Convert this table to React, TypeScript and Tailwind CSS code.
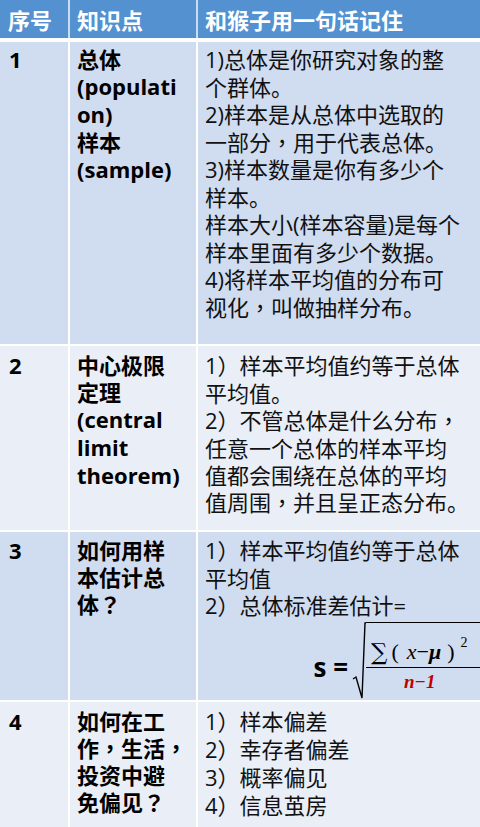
import React from 'react'

const cjk = { fontFamily: '"Noto Sans CJK SC", sans-serif' }
const latin = { fontFamily: '"Open Sans", "Noto Sans CJK SC", sans-serif' }
// TC centres full-width comma / question mark, closer to the reference
const punct = { fontFamily: '"Noto Sans CJK TC", "Noto Sans CJK SC", sans-serif' }

// split a line into ASCII, centred punctuation and CJK runs
function Mixed({ text }: { text: string }) {
  const parts = text.match(/[\x20-\x7e]+|[，？]+|[^\x20-\x7e，？]+/g) || []
  return (
    <>
      {parts.map((p, i) => {
        if (/^[\x20-\x7e]+$/.test(p))
          return (
            <span key={i} style={latin}>
              {p}
            </span>
          )
        if (/^[，？]+$/.test(p))
          return (
            <span key={i} style={punct}>
              {p}
            </span>
          )
        return <span key={i}>{p}</span>
      })}
    </>
  )
}

type Row = {
  no: string
  topic: string[]
  notes: string[]
  height: string
  bg: string
  pt: string
  formula?: boolean
}

const rows: Row[] = [
  {
    no: '1',
    topic: ['总体', '(populati', 'on)', '样本', '(sample)'],
    notes: [
      '1)总体是你研究对象的整',
      '个群体。',
      '2)样本是从总体中选取的',
      '一部分，用于代表总体。',
      '3)样本数量是你有多少个',
      '样本。',
      '样本大小(样本容量)是每个',
      '样本里面有多少个数据。',
      '4)将样本平均值的分布可',
      '视化，叫做抽样分布。',
    ],
    height: 'h-[302px]',
    bg: 'bg-[#d0dcef]',
    pt: 'pt-[3px]',
  },
  {
    no: '2',
    topic: ['中心极限', '定理', '(central', 'limit', 'theorem)'],
    notes: [
      '1）样本平均值约等于总体',
      '平均值。',
      '2）不管总体是什么分布，',
      '任意一个总体的样本平均',
      '值都会围绕在总体的平均',
      '值周围，并且呈正态分布。',
    ],
    height: 'h-[184px]',
    bg: 'bg-[#e9eef7]',
    pt: 'pt-[5px]',
  },
  {
    no: '3',
    topic: ['如何用样', '本估计总', '体？'],
    notes: ['1）样本平均值约等于总体', '平均值', '2）总体标准差估计='],
    height: 'h-[168px]',
    bg: 'bg-[#d0dcef]',
    pt: 'pt-[4px]',
    formula: true,
  },
  {
    no: '4',
    topic: ['如何在工', '作，生活，', '投资中避', '免偏见？'],
    notes: ['1）样本偏差', '2）幸存者偏差', '3）概率偏见', '4）信息茧房'],
    height: 'h-[125px]',
    bg: 'bg-[#e9eef7]',
    pt: 'pt-[5px]',
  },
]

function Formula() {
  const serif = { fontFamily: '"Liberation Serif", "DejaVu Serif", serif' }
  return (
    <div className="flex items-end justify-end mt-[3px]">
      <span
        className="mb-[20px] mr-[4px] text-[26px] font-bold leading-none text-black whitespace-nowrap"
        style={latin}
      >
        s =
      </span>
      <div className="flex items-stretch h-[78px]">
        <svg width="14" height="78" viewBox="0 0 14 78" className="shrink-0">
          <path d="M1 57 L4 55 L10 76 L13 1 L14 1" fill="none" stroke="#000" strokeWidth="1.4" />
        </svg>
        <div className="border-t-[1.5px] border-black w-[114px] flex flex-col pt-[13px]">
          <div className="flex items-start border-b-[1.5px] border-black pl-[5px] h-[32px] text-[22px] leading-none text-black">
            <span className="mt-[5px] text-[23px]" style={{ fontFamily: '"DejaVu Serif", serif' }}>
              ∑
            </span>
            <span className="mt-[5px] ml-[4px]" style={serif}>
              (
            </span>
            <span className="mt-[5px] ml-[8px] italic" style={serif}>
              x
            </span>
            <span className="mt-[5px]" style={serif}>
              −
            </span>
            <span className="mt-[5px] italic font-bold" style={serif}>
              μ
            </span>
            <span className="mt-[5px] ml-[6px]" style={serif}>
              )
            </span>
            <span className="ml-[6px] text-[14px]" style={serif}>
              2
            </span>
          </div>
          <div
            className="pl-[38px] pt-[4px] text-[19px] leading-none font-bold italic text-[#c00000]"
            style={serif}
          >
            n−1
          </div>
        </div>
      </div>
    </div>
  )
}

export default function App() {
  return (
    <div className="w-[480px] h-[827px] overflow-hidden bg-white flex flex-col gap-[4px]" style={cjk}>
      <div className="grid grid-cols-[68px_126px_1fr] gap-x-[2px] h-[38px] bg-[#c9dcf0]">
        {['序号', '知识点', '和猴子用一句话记住'].map((t, i) => (
          <div
            key={t}
            className={`bg-[#5391d1] text-white font-bold text-[22px] leading-[38px] whitespace-nowrap ${
              i === 0 ? 'pl-[8px]' : 'pl-[7px]'
            }`}
          >
            {t}
          </div>
        ))}
      </div>

      <div className="flex flex-col gap-[2px]">
        {rows.map((r) => (
          <div key={r.no} className={`grid grid-cols-[68px_126px_1fr] gap-x-[2px] ${r.height}`}>
            <div className={`${r.bg} ${r.pt} pl-[9px] text-[22px] leading-[27px] font-bold text-black`}>
              <Mixed text={r.no} />
            </div>
            <div className={`${r.bg} ${r.pt} pl-[7px] text-[22px] leading-[27px] font-bold text-black`}>
              {r.topic.map((l) => (
                <div key={l} className="whitespace-nowrap">
                  <Mixed text={l} />
                </div>
              ))}
            </div>
            <div className={`${r.bg} ${r.pt} pl-[7px] text-[22px] leading-[27px] text-[#111]`}>
              {r.notes.map((l) => (
                <div key={l} className="whitespace-nowrap">
                  <Mixed text={l} />
                </div>
              ))}
              {r.formula && <Formula />}
            </div>
          </div>
        ))}
      </div>
    </div>
  )
}
